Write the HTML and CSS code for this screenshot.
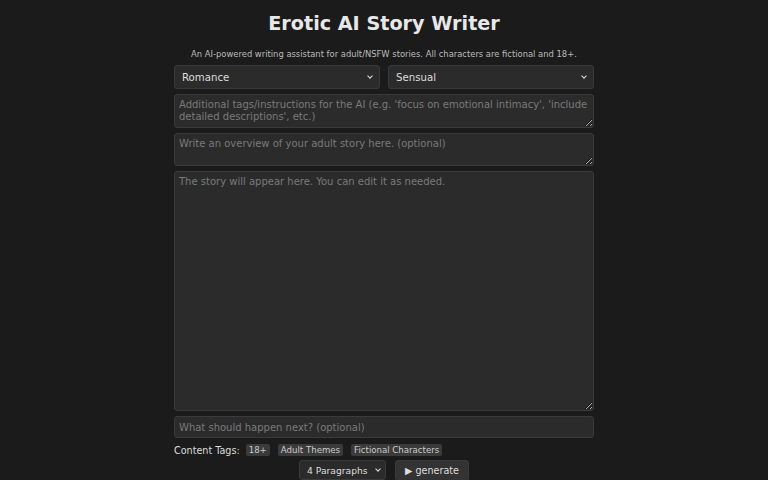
FILE: index.html
```html
<!DOCTYPE html>
<html>

<head>
    <title>Erotic AI Story Writer</title>
    <link rel="stylesheet" href="styles.css">
</head>

<body>
    <main class="app">
        <h1>Erotic AI Story Writer</h1>
        <p class="subtitle">An AI-powered writing assistant for adult/NSFW stories. All characters are fictional and 18+.</p>

        <div class="row">
            <label class="pick">
                <select class="field">
                    <option>Romance</option>
                    <option>Fantasy</option>
                    <option>Drama</option>
                </select>
            </label>
            <label class="pick">
                <select class="field">
                    <option>Sensual</option>
                    <option>Passionate</option>
                    <option>Explicit</option>
                </select>
            </label>
        </div>

        <textarea class="field tags-box" placeholder="Additional tags/instructions for the AI (e.g. 'focus on emotional intimacy', 'include detailed descriptions', etc.)"></textarea>
        <textarea class="field overview" placeholder="Write an overview of your adult story here. (optional)"></textarea>
        <textarea class="field story" placeholder="The story will appear here. You can edit it as needed."></textarea>
        <input class="field next" type="text" placeholder="What should happen next? (optional)">

        <div class="content-tags">
            <span class="label">Content Tags:</span>
            <span class="tag">18+</span>
            <span class="tag">Adult Themes</span>
            <span class="tag">Fictional Characters</span>
        </div>

        <div class="controls">
            <label class="pick small">
                <select class="field">
                    <option>1 Paragraph</option>
                    <option>2 Paragraphs</option>
                    <option>3 Paragraphs</option>
                    <option selected>4 Paragraphs</option>
                </select>
            </label>
            <button class="generate">&#9654; generate</button>
        </div>
    </main>
</body>

</html>
```

FILE: styles.css
```css
body {
    margin: 0;
    background-color: #1b1b1b;
    color: #e0e0e0;
    font-family: "DejaVu Sans", sans-serif;
}

.app {
    width: 420px;
    margin: 0 auto;
    display: flex;
    flex-direction: column;
    gap: 5px;
}

h1 {
    margin: 12px 0 0;
    text-align: center;
    font-size: 19.2px;
    color: #e8e8e8;
}

.subtitle {
    margin: 9px 0 1px;
    text-align: center;
    font-size: 8.4px;
    color: #bbbbbb;
}

.row {
    display: flex;
    gap: 8px;
}

.field {
    box-sizing: border-box;
    background-color: #2b2b2b;
    color: #dddddd;
    border: 1px solid #3a3a3a;
    border-radius: 3px;
    font-family: "DejaVu Sans", sans-serif;
    font-size: 10px;
    padding: 4px;
    outline: none;
}

/* select wrapper, draws its own small chevron */
.pick {
    flex: 1;
    position: relative;
    display: flex;
}

.pick select {
    flex: 1;
    appearance: none;
    height: 24px;
    padding: 0 7px;
    font-size: 10.2px;
}

.pick::after {
    content: "";
    position: absolute;
    right: 8px;
    top: 9px;
    width: 3px;
    height: 3px;
    border-right: 1.5px solid #dddddd;
    border-bottom: 1.5px solid #dddddd;
    transform: rotate(45deg);
    pointer-events: none;
}

textarea.field {
    resize: vertical;
    line-height: 12px;
}

.field::placeholder {
    color: #7a7a7a;
}

.tags-box {
    height: 34px;
}

.overview {
    height: 33px;
}

.story {
    height: 240px;
}

.next {
    height: 22px;
}

.content-tags {
    display: flex;
    align-items: center;
    gap: 8px;
    margin-top: 1px;
    font-size: 9.6px;
    color: #dddddd;
}

.label {
    margin-right: -2px;
}

.tag {
    background-color: #3a3a3a;
    border-radius: 2px;
    padding: 1px 3px;
    font-size: 8.6px;
    color: #cccccc;
}

.controls {
    display: flex;
    justify-content: center;
    gap: 9px;
    margin-top: -1px;
}

.pick.small {
    flex: none;
    width: 87px;
}

.pick.small select {
    height: 20px;
    padding: 0 14px 0 7px;
    font-size: 9.2px;
}

.pick.small::after {
    top: 7px;
    right: 6px;
}

.generate {
    height: 21px;
    padding: 0 9px;
    background-color: #333333;
    color: #dddddd;
    border: 1px solid #3a3a3a;
    border-radius: 3px;
    font-family: "DejaVu Sans", sans-serif;
    font-size: 9.6px;
}
```
